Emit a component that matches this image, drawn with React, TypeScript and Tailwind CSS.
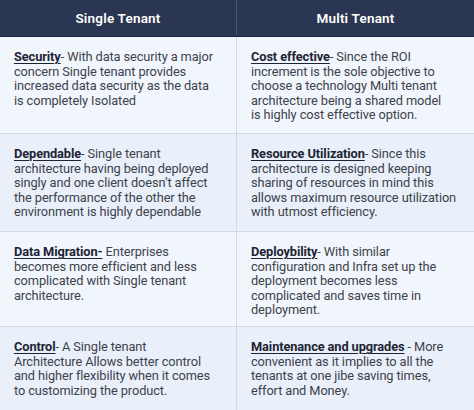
import React from "react";

type Cell = { title: string; lines: string[] };

const rows: { bg: string; h: string; left: Cell; right: Cell }[] = [
  {
    bg: "bg-[#f1f6fd]",
    h: "h-[97px]",
    left: {
      title: "Security",
      lines: [
        "- With data security a major",
        "concern Single tenant provides",
        "increased data security as the data",
        "is completely Isolated",
      ],
    },
    right: {
      title: "Cost effective",
      lines: [
        "- Since the ROI",
        "increment is the sole objective to",
        "choose a technology Multi tenant",
        "architecture being a shared model",
        "is highly cost effective option.",
      ],
    },
  },
  {
    bg: "bg-[#e9f0fa]",
    h: "h-[98px]",
    left: {
      title: "Dependable",
      lines: [
        "- Single tenant",
        "architecture having being deployed",
        "singly and one client doesn\u2019t affect",
        "the performance of the other the",
        "environment is highly dependable",
      ],
    },
    right: {
      title: "Resource Utilization",
      lines: [
        "- Since this",
        "architecture is designed keeping",
        "sharing of resources in mind this",
        "allows maximum resource utilization",
        "with utmost efficiency.",
      ],
    },
  },
  {
    bg: "bg-[#f1f6fd]",
    h: "h-[95px]",
    left: {
      title: "Data Migration-",
      lines: [
        " Enterprises",
        "becomes more efficient and less",
        "complicated with Single tenant",
        "architecture.",
      ],
    },
    right: {
      title: "Deploybility",
      lines: [
        "- With similar",
        "configuration and Infra set up the",
        "deployment becomes less",
        "complicated and saves time in",
        "deployment.",
      ],
    },
  },
  {
    bg: "bg-[#e9f0fa]",
    h: "flex-1",
    left: {
      title: "Control",
      lines: [
        "- A Single tenant",
        "Architecture Allows better control",
        "and higher flexibility when it comes",
        "to customizing the product.",
      ],
    },
    right: {
      title: "Maintenance and upgrades",
      lines: [
        " - More",
        "convenient as it implies to all the",
        "tenants at one jibe saving times,",
        "effort and Money.",
      ],
    },
  },
];

function CellView({ c }: { c: Cell }) {
  return (
    <div className="pl-[14px] pt-[13px] text-[12.8px] leading-[14.6px] text-[#3e424b] tracking-[-0.1px]">
      <div className="whitespace-pre">
        <span className="font-bold text-[#1e2433] underline decoration-[1px] underline-offset-[2px]">
          {c.title}
        </span>
        {c.lines[0]}
      </div>
      {c.lines.slice(1).map((l, i) => (
        <div key={i} className="whitespace-pre">
          {l}
        </div>
      ))}
    </div>
  );
}

export default function App() {
  return (
    <div
      className="w-[474px] h-[410px] flex flex-col bg-[#f1f6fd] overflow-hidden"
      style={{ fontFamily: 'Roboto, "Noto Sans", sans-serif' }}
    >
      <div className="h-[37px] flex bg-[#2b3652] text-white text-[13.5px] font-semibold tracking-[0.2px] border-b border-[#1f2840]">
        <div className="w-[237px] flex items-center justify-center border-r border-[#4a5470] pt-[1px]">
          Single Tenant
        </div>
        <div className="flex-1 flex items-center justify-center pt-[1px]">Multi Tenant</div>
      </div>
      {rows.map((r, i) => (
        <div
          key={i}
          className={`${r.h} ${r.bg} flex ${i < rows.length - 1 ? "border-b border-[#d3d9e1]" : ""}`}
        >
          <div className="w-[237px] border-r border-[#d3d9e1]">
            <CellView c={r.left} />
          </div>
          <div className="flex-1">
            <CellView c={r.right} />
          </div>
        </div>
      ))}
    </div>
  );
}
